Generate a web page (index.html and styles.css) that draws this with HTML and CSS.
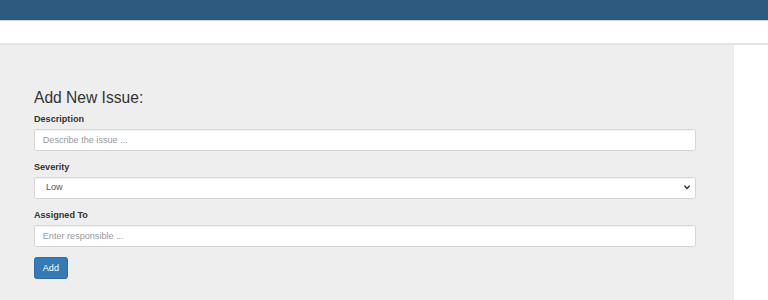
FILE: index.html
```html
<!DOCTYPE html>
<html>
<head>
<meta charset="utf-8">
<link rel="stylesheet" href="styles.css">
</head>
<body>
<nav class="navbar"></nav>
<div class="spacer"></div>
<div class="page">
  <div class="jumbotron">
    <h3 class="title">Add New Issue:</h3>
    <form class="issue-form">
      <div class="form-group">
        <label class="label" for="desc">Description</label>
        <input class="control" id="desc" type="text" placeholder="Describe the issue ...">
      </div>
      <div class="form-group">
        <label class="label" for="sev">Severity</label>
        <div class="select-wrap">
          <select class="control select" id="sev">
            <option>Low</option>
            <option>Medium</option>
            <option>High</option>
          </select>
          <svg class="chevron" width="6" height="5" viewBox="0 0 6 5" aria-hidden="true">
            <polyline points="0.8,1 3,3.6 5.2,1" fill="none" stroke="#333" stroke-width="1.4" stroke-linecap="round" stroke-linejoin="round"/>
          </svg>
        </div>
      </div>
      <div class="form-group">
        <label class="label" for="assign">Assigned To</label>
        <input class="control" id="assign" type="text" placeholder="Enter responsible ...">
      </div>
      <button class="btn" type="button">Add</button>
    </form>
  </div>
</div>
</body>
</html>
```

FILE: styles.css
```css
html, body {
  margin: 0;
  padding: 0;
  background: #fff;
  font-family: "Liberation Sans", Arial, Helvetica, sans-serif;
  color: #333;
}

body {
  height: 300px;
  overflow: hidden;
}

.navbar {
  height: 20px;
  background: #2d5a7e;
  border-bottom: 1px solid #c9d4de;
}

.spacer {
  height: 22px;
}

.page {
  border-top: 2px solid #e4e4e4;
}

.jumbotron {
  width: 662px;
  background: #eeeeee;
  padding: 31px 38px 0 34px;
  height: 224px;
}

.title {
  margin: 13px 0 6.5px;
  font-size: 15.6px;
  font-weight: 500;
  line-height: 1.1;
  color: #333;
}

.issue-form {
  margin: 0;
}

.form-group {
  margin-bottom: 9.75px;
}

.label {
  display: block;
  font-size: 9.1px;
  font-weight: 700;
  line-height: 13px;
  margin-bottom: 3.25px;
  color: #333;
}

.control {
  display: block;
  box-sizing: border-box;
  width: 100%;
  height: 22px;
  padding: 3.9px 7.8px;
  font-family: "Liberation Sans", Arial, Helvetica, sans-serif;
  font-size: 9.1px;
  line-height: 13px;
  color: #555;
  background: #fff;
  border: 1px solid #d6d6d6;
  border-radius: 2.6px;
  box-shadow: inset 0 1px 1px rgba(0, 0, 0, 0.05);
  margin: 0;
}

.control::placeholder {
  color: #999;
}

.select-wrap {
  position: relative;
}

.select {
  -webkit-appearance: none;
  appearance: none;
  padding: 0 16px 0 11px;
}

.chevron {
  position: absolute;
  right: 6px;
  top: 8px;
  pointer-events: none;
}

.btn {
  display: inline-block;
  box-sizing: border-box;
  height: 22px;
  padding: 3.9px 7.8px;
  font-family: "Liberation Sans", Arial, Helvetica, sans-serif;
  font-size: 9.1px;
  line-height: 13px;
  color: #fff;
  background: #337ab7;
  border: 1px solid #2e6da4;
  border-radius: 2.6px;
  margin: 0;
}
```
